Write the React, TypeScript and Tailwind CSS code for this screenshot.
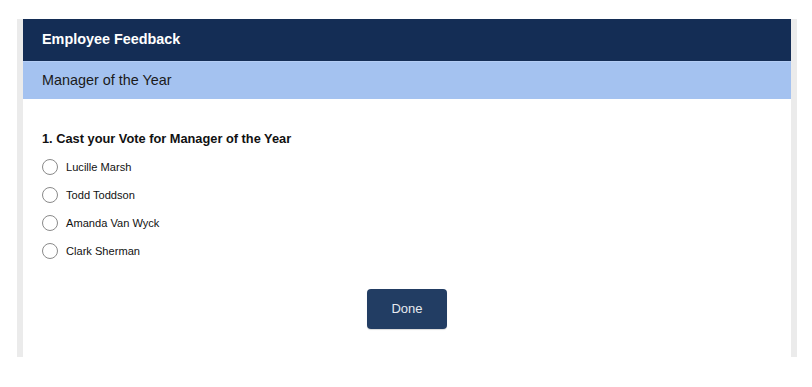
const OPTIONS = ["Lucille Marsh", "Todd Toddson", "Amanda Van Wyck", "Clark Sherman"];

export default function App() {
  return (
    <div className="min-h-screen bg-white pt-[19px] pl-[17px] font-['Liberation_Sans',Arial,sans-serif]">
      <div className="flex h-[338px] w-[780px] flex-col border-x-[6px] border-[#ebebeb] bg-white">
        <div className="flex h-[42px] items-center bg-[#142d55] px-[19px]">
          <span className="text-[14.4px] font-bold text-white">Employee Feedback</span>
        </div>
        <div className="flex h-[38px] items-center border-t border-[#b4cdf4] bg-[#a4c2f0] px-[19px]">
          <span className="text-[14.4px] text-[#1a1a1a]">Manager of the Year</span>
        </div>
        <div className="flex flex-col px-[19px] pt-[32px]">
          <h2 className="text-[12.8px] font-bold leading-[16px] text-[#111]">
            1. Cast your Vote for Manager of the Year
          </h2>
          <div className="mt-[6px] flex flex-col">
            {OPTIONS.map((name) => (
              <label key={name} className="flex h-[28px] items-center gap-[8px]">
                <span className="h-[16px] w-[16px] rounded-full border border-[#8a8a8a] bg-white" />
                <span className="text-[11.1px] text-[#111]">{name}</span>
              </label>
            ))}
          </div>
          <div className="mt-[24px] flex justify-center">
            <button className="h-[40px] w-[80px] rounded-[4px] bg-[#223d63] text-[13px] text-[#e6eaf0] shadow-[0_1px_1px_rgba(0,0,0,0.15)]">
              Done
            </button>
          </div>
        </div>
      </div>
    </div>
  );
}
